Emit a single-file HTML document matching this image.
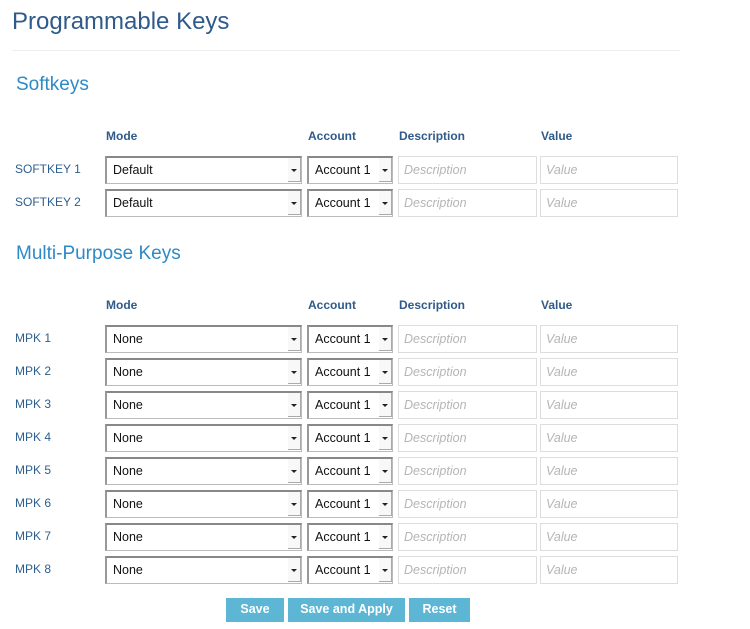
<!DOCTYPE html>
<html><head><meta charset="utf-8"><style>
*{box-sizing:border-box;margin:0;padding:0}
body{width:750px;height:629px;background:#fff;font-family:"Liberation Sans",sans-serif;position:relative;overflow:hidden}
.a{position:absolute}
h1{position:absolute;left:12px;top:8px;font-size:24px;font-weight:normal;color:#2f5a8a}
.hr{left:12px;top:50px;width:668px;height:1px;background:#eee}
h2{position:absolute;left:16px;font-size:19px;font-weight:normal;color:#2e8ac6}
.hd{position:absolute;font-size:12px;font-weight:bold;color:#2f5a8a}
.lb{position:absolute;left:15px;font-size:12px;color:#2c5f8f}
.sel{position:absolute;height:28px;border:1px solid #bbb;border-top:2px solid #888;border-left:2px solid #999;background:#fff;font-size:12.5px;color:#111;padding:5px 0 0 6px}
.sel i{position:absolute;right:0;top:0;width:13px;height:24px;background:#f8f8f8;box-shadow:inset -1px -1px 0 #aaa}
.sel i:after{content:"";position:absolute;left:3px;top:11px;border-left:3px solid transparent;border-right:3px solid transparent;border-top:3px solid #222}
.inp{position:absolute;height:28px;border:1px solid #ddd;font-size:12.5px;font-style:italic;color:#b5b5b5;padding:6px 0 0 5px}
.btn{position:absolute;top:598px;height:24px;background:#5db6d4;color:#fff;font-size:12.5px;font-weight:bold;text-align:center;line-height:23px}
</style></head><body>
<h1>Programmable Keys</h1>
<div class="a hr"></div>
<h2 style="top:74px">Softkeys</h2>
<div class="hd" style="left:106px;top:129px">Mode</div>
<div class="hd" style="left:308px;top:129px">Account</div>
<div class="hd" style="left:399px;top:129px">Description</div>
<div class="hd" style="left:541px;top:129px">Value</div>

<div class="lb" style="top:162px">SOFTKEY 1</div>
<div class="sel" style="left:105px;top:156px;width:197px">Default<i></i></div>
<div class="sel" style="left:307px;top:156px;width:86px">Account 1<i></i></div>
<div class="inp" style="left:398px;top:156px;width:139px">Description</div>
<div class="inp" style="left:540px;top:156px;width:138px">Value</div>

<div class="lb" style="top:195px">SOFTKEY 2</div>
<div class="sel" style="left:105px;top:189px;width:197px">Default<i></i></div>
<div class="sel" style="left:307px;top:189px;width:86px">Account 1<i></i></div>
<div class="inp" style="left:398px;top:189px;width:139px">Description</div>
<div class="inp" style="left:540px;top:189px;width:138px">Value</div>

<h2 style="top:243px">Multi-Purpose Keys</h2>
<div class="hd" style="left:106px;top:298px">Mode</div>
<div class="hd" style="left:308px;top:298px">Account</div>
<div class="hd" style="left:399px;top:298px">Description</div>
<div class="hd" style="left:541px;top:298px">Value</div>

<div class="lb" style="top:331px">MPK 1</div>
<div class="sel" style="left:105px;top:325px;width:197px">None<i></i></div>
<div class="sel" style="left:307px;top:325px;width:86px">Account 1<i></i></div>
<div class="inp" style="left:398px;top:325px;width:139px">Description</div>
<div class="inp" style="left:540px;top:325px;width:138px">Value</div>

<div class="lb" style="top:364px">MPK 2</div>
<div class="sel" style="left:105px;top:358px;width:197px">None<i></i></div>
<div class="sel" style="left:307px;top:358px;width:86px">Account 1<i></i></div>
<div class="inp" style="left:398px;top:358px;width:139px">Description</div>
<div class="inp" style="left:540px;top:358px;width:138px">Value</div>

<div class="lb" style="top:397px">MPK 3</div>
<div class="sel" style="left:105px;top:391px;width:197px">None<i></i></div>
<div class="sel" style="left:307px;top:391px;width:86px">Account 1<i></i></div>
<div class="inp" style="left:398px;top:391px;width:139px">Description</div>
<div class="inp" style="left:540px;top:391px;width:138px">Value</div>

<div class="lb" style="top:430px">MPK 4</div>
<div class="sel" style="left:105px;top:424px;width:197px">None<i></i></div>
<div class="sel" style="left:307px;top:424px;width:86px">Account 1<i></i></div>
<div class="inp" style="left:398px;top:424px;width:139px">Description</div>
<div class="inp" style="left:540px;top:424px;width:138px">Value</div>

<div class="lb" style="top:463px">MPK 5</div>
<div class="sel" style="left:105px;top:457px;width:197px">None<i></i></div>
<div class="sel" style="left:307px;top:457px;width:86px">Account 1<i></i></div>
<div class="inp" style="left:398px;top:457px;width:139px">Description</div>
<div class="inp" style="left:540px;top:457px;width:138px">Value</div>

<div class="lb" style="top:496px">MPK 6</div>
<div class="sel" style="left:105px;top:490px;width:197px">None<i></i></div>
<div class="sel" style="left:307px;top:490px;width:86px">Account 1<i></i></div>
<div class="inp" style="left:398px;top:490px;width:139px">Description</div>
<div class="inp" style="left:540px;top:490px;width:138px">Value</div>

<div class="lb" style="top:529px">MPK 7</div>
<div class="sel" style="left:105px;top:523px;width:197px">None<i></i></div>
<div class="sel" style="left:307px;top:523px;width:86px">Account 1<i></i></div>
<div class="inp" style="left:398px;top:523px;width:139px">Description</div>
<div class="inp" style="left:540px;top:523px;width:138px">Value</div>

<div class="lb" style="top:562px">MPK 8</div>
<div class="sel" style="left:105px;top:556px;width:197px">None<i></i></div>
<div class="sel" style="left:307px;top:556px;width:86px">Account 1<i></i></div>
<div class="inp" style="left:398px;top:556px;width:139px">Description</div>
<div class="inp" style="left:540px;top:556px;width:138px">Value</div>

<div class="btn" style="left:226px;width:58px">Save</div>
<div class="btn" style="left:288px;width:117px">Save and Apply</div>
<div class="btn" style="left:409px;width:61px">Reset</div>
</body></html>
